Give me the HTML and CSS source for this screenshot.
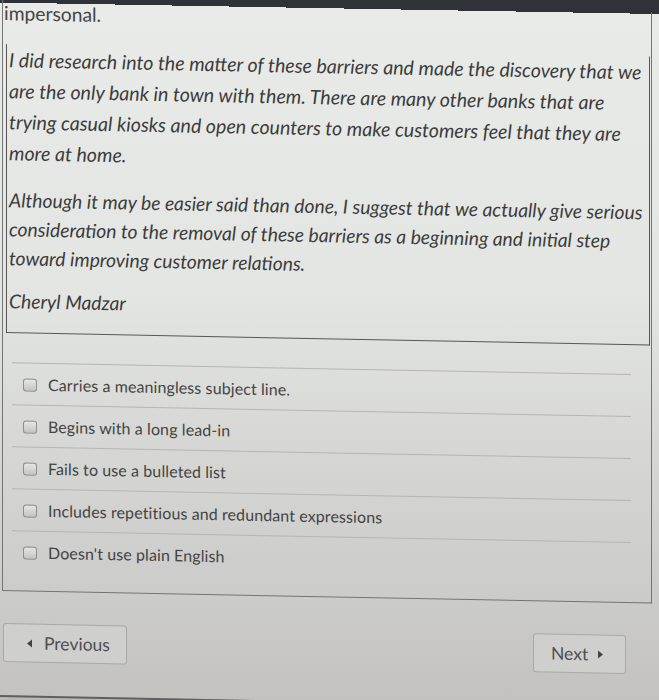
FILE: index.html
```html
<!DOCTYPE html>
<html lang="en">
<head>
<meta charset="utf-8">
<title>Question</title>
<link rel="stylesheet" href="styles.css">
</head>
<body>
<div class="page">
  <main class="question">
    <p class="prev">impersonal.</p>
    <div class="letter">
      <p class="first">I did research into the matter of these barriers and made the discovery that we<br>are the only bank in town with them. There are many other banks that are<br>trying casual kiosks and open counters to make customers feel that they are<br>more at home.</p>
      <p class="second">Although it may be easier said than done, I suggest that we actually give serious<br>consideration to the removal of these barriers as a beginning and initial step<br>toward improving customer relations.</p>
      <p class="sig">Cheryl Madzar</p>
    </div>
    <ul class="options">
      <li><label><input type="checkbox"><span>Carries a meaningless subject line.</span></label></li>
      <li><label><input type="checkbox"><span>Begins with a long lead-in</span></label></li>
      <li><label><input type="checkbox"><span>Fails to use a bulleted list</span></label></li>
      <li><label><input type="checkbox"><span>Includes repetitious and redundant expressions</span></label></li>
      <li><label><input type="checkbox"><span>Doesn't use plain English</span></label></li>
    </ul>
  </main>
  <nav class="pager">
    <button class="btn btn-prev" type="button"><span class="tri tri-left"></span>Previous</button>
    <button class="btn btn-next" type="button">Next<span class="tri tri-right"></span></button>
  </nav>
  <div class="bottom-edge"></div>
</div>
</body>
</html>
```

FILE: styles.css
```css
html, body {
  margin: 0;
  padding: 0;
}

body {
  width: 659px;
  height: 700px;
  overflow: hidden;
  font-family: Lato, "Open Sans", sans-serif;
  color: #3c3c3c;
  background:
    linear-gradient(181deg, #2f3237 0, #2f3237 14px, transparent 14px) top left / 100% 16px no-repeat,
    linear-gradient(180deg, #e9ebe8 0, #e3e5e2 300px, #d6d7d4 450px, #cbcbc9 600px, #c3c2c0 700px);
}

/* the photo was taken at a slight angle: right side sits lower */
.page {
  transform: skewY(1.1deg);
  transform-origin: 0 0;
}

.question {
  margin: 0 7px 0 2px;
  border: 1px solid #747474;
  border-top: none;
  padding: 2px 0 18px 0;
}

.prev {
  margin: 0;
  padding-left: 1px;
  font-size: 19.3px;
  line-height: 22px;
  color: #444;
}

.letter {
  margin: 20px 1px 0 3px;
  border: 1px solid #575757;
  border-top: none;
  padding: 0 0 17px 2px;
  font-style: italic;
  font-size: 19.3px;
  line-height: 29px;
  white-space: nowrap;
}

.letter p {
  margin: 0;
}

.letter .first {
  font-size: 19.6px;
  line-height: 31px;
}

.letter .second {
  margin-top: 17px;
}

.letter .sig {
  margin-top: 14px;
}

.options {
  list-style: none;
  margin: 29px 20px 0 9px;
  padding: 0;
}

.options li {
  border-top: 1px solid #b5b5b3;
  padding: 12px 0 11px 0;
}

.options label {
  display: flex;
  align-items: center;
  gap: 11px;
  padding-left: 11px;
  font-size: 16px;
  letter-spacing: 0.1px;
  line-height: 18px;
  color: #444;
}

.options input {
  appearance: none;
  -webkit-appearance: none;
  margin: 0;
  width: 14px;
  height: 13px;
  border: 1px solid #8e8e8e;
  border-radius: 3px;
  background: linear-gradient(180deg, #e6e6e6, #c4c4c4);
  flex: none;
}

.pager {
  display: flex;
  justify-content: space-between;
  align-items: flex-start;
  margin: 32px 33px 0 3px;
}

.btn {
  display: inline-flex;
  align-items: center;
  height: 39px;
  border: 1px solid #a9a9a9;
  border-radius: 3px;
  background: #cfcfcd;
  font-family: Lato, "Open Sans", sans-serif;
  font-size: 17.5px;
  color: #4e4e4e;
  cursor: pointer;
}

.btn-prev {
  width: 124px;
  padding: 0 0 0 23px;
  gap: 12px;
}

.btn-next {
  width: 93px;
  padding: 0 0 0 17px;
  gap: 10px;
}

.tri {
  display: inline-block;
  width: 0;
  height: 0;
  border-top: 4px solid transparent;
  border-bottom: 4px solid transparent;
}

.tri-left {
  border-right: 5px solid #444;
}

.tri-right {
  border-left: 5px solid #444;
}

.bottom-edge {
  margin-top: 33px;
  height: 20px;
  border-top: 2px solid #5f5f5f;
  background: #b9b8b6;
}
```
